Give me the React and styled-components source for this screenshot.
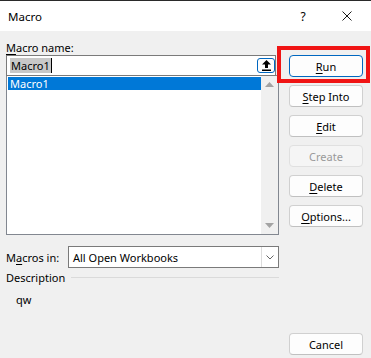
import React from "react";
import styled, { createGlobalStyle } from "styled-components";

const GlobalStyle = createGlobalStyle`
  body {
    margin: 0;
    background: #f0f0f0;
    font-family: "Noto Sans", "Open Sans", sans-serif;
    font-size: 11px;
    color: #000;
  }
`;

const Window = styled.div`
  position: relative;
  width: 371px;
  height: 358px;
  display: flex;
  flex-direction: column;
  background: #f0f0f0;
  overflow: hidden;
`;

const TitleBar = styled.div`
  height: 31px;
  box-sizing: border-box;
  border-top: 1px solid #2a2a2a;
  background: #ffffff;
  display: flex;
  align-items: center;
  padding-left: 8px;
  font-size: 11.5px;
`;

const TitleButtons = styled.div`
  margin-left: auto;
  display: flex;
  align-items: center;
  height: 100%;
`;

const Help = styled.span`
  width: 14px;
  font-size: 12px;
  margin-right: 32px;
  text-align: center;
`;

const Close = styled.span`
  width: 10px;
  height: 10px;
  margin-right: 19px;
  display: flex;
`;

const Body = styled.div`
  flex: 1;
  display: grid;
  grid-template-columns: 273px 74px;
  column-gap: 10px;
  padding: 10px 0 3px 6px;
  box-sizing: border-box;
`;

const LeftCol = styled.div`
  display: flex;
  flex-direction: column;
`;

const Label = styled.div`
  line-height: 14px;
  height: 14px;
  white-space: nowrap;
`;

const Key = styled.span`
  text-decoration: underline;
  text-underline-offset: 2px;
`;

const NameInput = styled.div`
  width: 270px;
  height: 21px;
  box-sizing: border-box;
  border: 1px solid #7a7a7a;
  background: #fff;
  display: flex;
  align-items: center;
  padding-left: 3px;
  position: relative;
  z-index: 1;
`;

const Selected = styled.span`
  background: #c8c8c8;
  line-height: 15px;
  padding: 0 1px;
`;

const Caret = styled.span`
  width: 1px;
  height: 15px;
  background: #000;
`;

const UploadBtn = styled.div`
  margin-left: auto;
  width: 18px;
  height: 15px;
  box-sizing: border-box;
  border: 1px solid #0067c0;
  border-radius: 3px;
  background: #fdfdfd;
  display: flex;
  align-items: center;
  justify-content: center;
`;

const List = styled.div`
  margin-top: -1px;
  height: 160px;
  box-sizing: border-box;
  border: 1px solid #828790;
  background: #fff;
  display: flex;
  padding: 1px 0 0 1px;
`;

const Rows = styled.div`
  flex: 1;
`;

const Row = styled.div`
  height: 13px;
  line-height: 13px;
  padding-left: 2px;
  background: ${(p) => (p.$active ? "#0078d7" : "transparent")};
  color: ${(p) => (p.$active ? "#fff" : "#000")};
`;

const Scroll = styled.div`
  width: 17px;
  margin-top: -1px;
  background: #f0f0f0;
  display: flex;
  flex-direction: column;
  justify-content: space-between;
  align-items: center;
  padding: 6px 0 6px;
`;

const MacrosRow = styled.div`
  margin-top: 11px;
  display: flex;
  align-items: center;
  height: 22px;
`;

const InLabel = styled.div`
  width: 62px;
`;

const Select = styled.div`
  flex: 1;
  height: 22px;
  box-sizing: border-box;
  border: 1px solid #7a7a7a;
  background: #fff;
  display: flex;
  align-items: center;
  padding-left: 4px;
`;

const SelectArrow = styled.div`
  margin-left: auto;
  width: 16px;
  height: 100%;
  border-left: 1px solid #dcdcdc;
  display: flex;
  align-items: center;
  justify-content: center;
`;

const DescRow = styled.div`
  margin-top: 1px;
  display: flex;
  align-items: center;
  height: 16px;
  &::after {
    content: "";
    flex: 1;
    height: 1px;
    margin-left: 6px;
    background: #dadada;
  }
`;

const DescText = styled.div`
  padding-left: 10px;
  margin-top: 7px;
`;

const RightCol = styled.div`
  display: flex;
  flex-direction: column;
  gap: 8px;
  padding-top: 14px;
`;

const Button = styled.div`
  height: 22px;
  box-sizing: border-box;
  border: 1px solid ${(p) => (p.$primary ? "#0067c0" : p.$disabled ? "#e0e0e0" : "#d0d0d0")};
  border-bottom-color: ${(p) => (p.$primary ? "#0067c0" : p.$disabled ? "#e0e0e0" : "#c0c0c0")};
  border-radius: 4px;
  background: ${(p) => (p.$disabled ? "#f5f5f5" : "#fdfdfd")};
  color: ${(p) => (p.$disabled ? "#9a9a9a" : "#000")};
  display: flex;
  align-items: center;
  justify-content: center;
  margin-top: ${(p) => (p.$bottom ? "auto" : "0")};
`;

const Highlight = styled.div`
  position: absolute;
  left: 277px;
  top: 46px;
  width: 93px;
  height: 37px;
  box-sizing: border-box;
  border: 4px solid #f01414;
  pointer-events: none;
`;

const Triangle = ({ down }) => (
  <svg width="9" height="5" viewBox="0 0 9 5">
    <path d={down ? "M0 0 H9 L4.5 5 Z" : "M0 5 H9 L4.5 0 Z"} fill="#a3a3a3" />
  </svg>
);

export default function App() {
  return (
    <Window>
      <GlobalStyle />
      <TitleBar>
        Macro
        <TitleButtons>
          <Help>?</Help>
          <Close>
            <svg width="10" height="10" viewBox="0 0 10 10">
              <path d="M0.5 0.5 L9.5 9.5 M9.5 0.5 L0.5 9.5" stroke="#1a1a1a" strokeWidth="1" />
            </svg>
          </Close>
        </TitleButtons>
      </TitleBar>
      <Body>
        <LeftCol>
          <Label>
            <Key>M</Key>acro name:
          </Label>
          <NameInput>
            <Selected>Macro1</Selected>
            <Caret />
            <UploadBtn>
              <svg width="9" height="11" viewBox="0 0 9 11">
                <path d="M4.5 0 L9 4.5 H6 V8 H3 V4.5 H0 Z" fill="#000" />
                <rect x="0" y="9.5" width="9" height="1.5" fill="#000" />
              </svg>
            </UploadBtn>
          </NameInput>
          <List>
            <Rows>
              <Row $active>Macro1</Row>
            </Rows>
            <Scroll>
              <Triangle />
              <Triangle down />
            </Scroll>
          </List>
          <MacrosRow>
            <InLabel>
              M<Key>a</Key>cros in:
            </InLabel>
            <Select>
              All Open Workbooks
              <SelectArrow>
                <svg width="8" height="5" viewBox="0 0 8 5">
                  <path d="M0.5 0.5 L4 4 L7.5 0.5" stroke="#555" strokeWidth="0.9" fill="none" />
                </svg>
              </SelectArrow>
            </Select>
          </MacrosRow>
          <DescRow>Description</DescRow>
          <DescText>qw</DescText>
        </LeftCol>
        <RightCol>
          <Button $primary>
            <Key>R</Key>un
          </Button>
          <Button>
            <Key>S</Key>tep Into
          </Button>
          <Button>
            <Key>E</Key>dit
          </Button>
          <Button $disabled>Create</Button>
          <Button>
            <Key>D</Key>elete
          </Button>
          <Button>
            <Key>O</Key>ptions...
          </Button>
          <Button $bottom>Cancel</Button>
        </RightCol>
      </Body>
      <Highlight />
    </Window>
  );
}
